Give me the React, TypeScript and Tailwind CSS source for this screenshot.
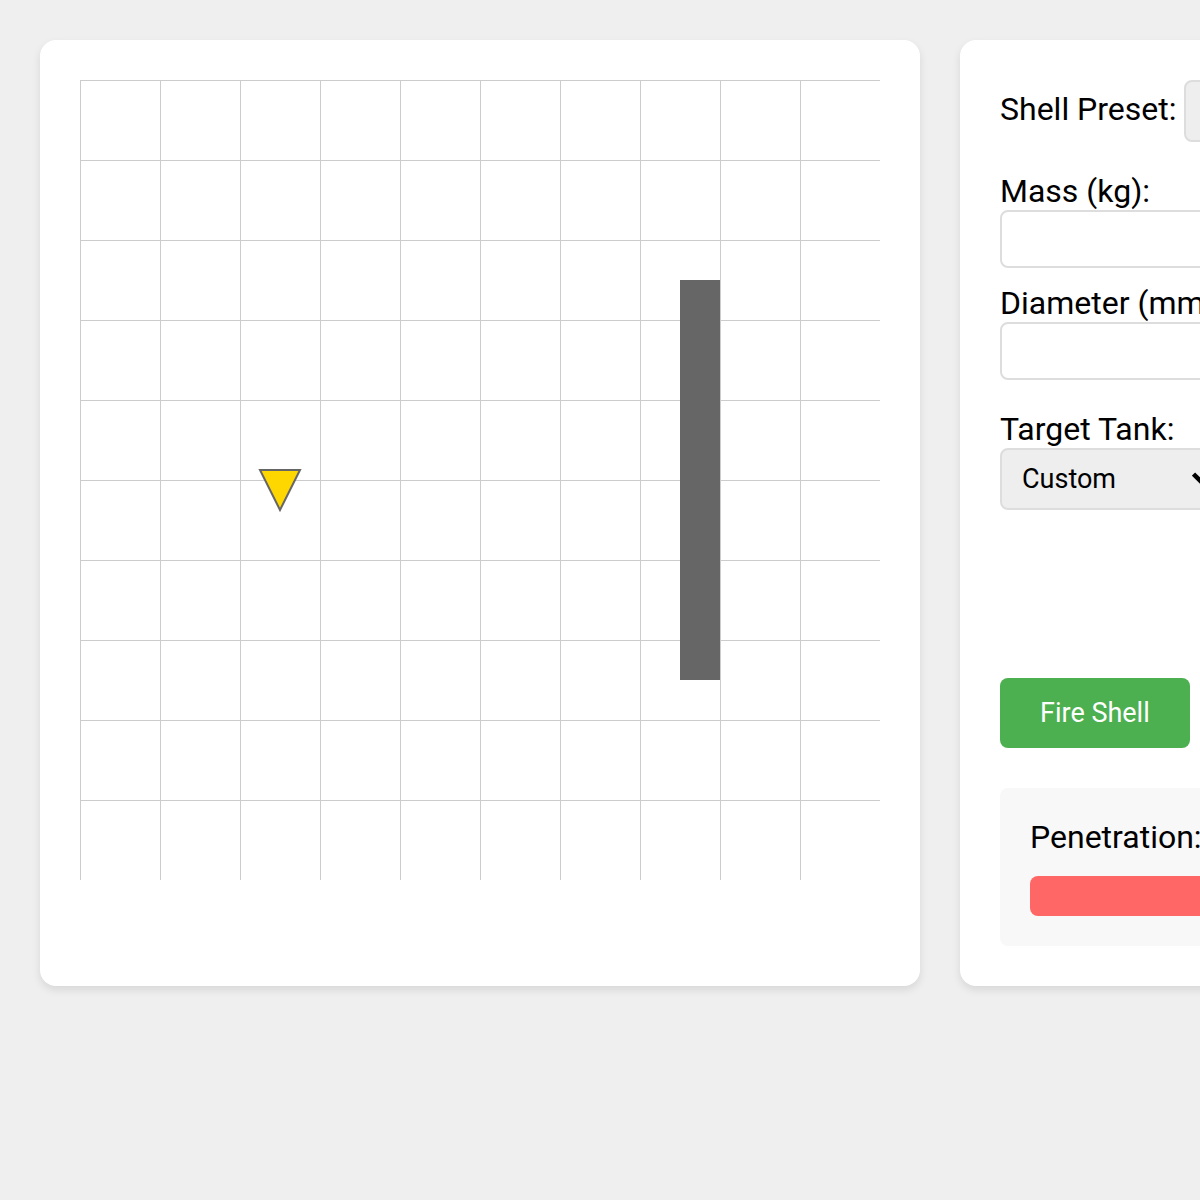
import { useState } from 'react';
import type { ReactNode } from 'react';

const gridLines = [0, 80, 160, 240, 320, 400, 480, 560, 640, 720];

const shellPresets = ['Custom', 'APFSDS', 'APCR', 'HEAT'];
const tankPresets = ['Custom', 'Light Tank', 'Medium Tank', 'Heavy Tank'];

function Panel({ children, className }: { children: ReactNode; className: string }) {
  return (
    <section className={`shrink-0 rounded-2xl bg-white p-10 shadow-[0_4px_8px_rgba(0,0,0,0.1)] ${className}`}>
      {children}
    </section>
  );
}

function Range() {
  return (
    <svg width="800" height="800" viewBox="0 0 800 800" role="img" aria-label="Firing range">
      {gridLines.map((pos) => (
        <path key={pos} d={`M${pos + 0.5} 0V800M0 ${pos + 0.5}H800`} stroke="#cccccc" strokeWidth="1" />
      ))}
      <rect x="600" y="200" width="40" height="400" fill="#666666" />
      <path d="M180 390H220L200 430Z" fill="#ffd700" stroke="#666666" strokeWidth="2" />
    </svg>
  );
}

function SelectBox({ id, options }: { id: string; options: string[] }) {
  return (
    <div className="relative w-[222px]">
      <select
        id={id}
        className="block h-[62px] w-full appearance-none rounded-lg border-2 border-[#dddddd] bg-[#eeeeee] pl-5 pr-10 text-[27px] text-black"
      >
        {options.map((option) => (
          <option key={option}>{option}</option>
        ))}
      </select>
      <svg
        className="pointer-events-none absolute right-2 top-5"
        width="22"
        height="22"
        viewBox="0 0 22 22"
        fill="none"
        stroke="#000000"
        strokeWidth="4.5"
      >
        <path d="M1.5 6L11 15.5L20.5 6" />
      </svg>
    </div>
  );
}

function NumberField({ id, label }: { id: string; label: string }) {
  return (
    <div>
      <label htmlFor={id} className="block">
        {label}
      </label>
      <input
        id={id}
        type="number"
        className="block h-[58px] w-full rounded-lg border-2 border-[#dddddd] bg-white px-4 text-[27px]"
      />
    </div>
  );
}

export default function App() {
  const [fired, setFired] = useState(false);

  return (
    <div className="min-h-screen overflow-x-hidden bg-[#efefef] p-10 font-[Roboto,sans-serif] text-[32px] leading-[38px] text-black">
      <main className="flex gap-10">
        <Panel className="w-[880px]">
          <Range />
        </Panel>

        <Panel className="w-[680px]">
          <div className="mb-[30px] flex items-baseline gap-[7px]">
            <label htmlFor="shell" className="whitespace-nowrap">Shell Preset:</label>
            <SelectBox id="shell" options={shellPresets} />
          </div>

          <div className="mb-[30px] flex flex-col gap-4">
            <NumberField id="mass" label="Mass (kg):" />
            <NumberField id="diameter" label="Diameter (mm):" />
          </div>

          <label htmlFor="tank" className="block">Target Tank:</label>
          <SelectBox id="tank" options={tankPresets} />

          <button
            type="button"
            onClick={() => setFired(true)}
            className="mb-10 mt-[168px] block h-[70px] rounded-lg bg-[#4caf50] px-10 text-[27px] text-white"
          >
            Fire Shell
          </button>

          <div className="rounded-lg bg-[#f8f8f8] p-[30px]">
            <p>Penetration: {fired ? '0 mm' : ''}</p>
            <div className="mt-5 h-10 rounded-lg bg-[#ff6666]" />
          </div>
        </Panel>
      </main>
    </div>
  );
}
